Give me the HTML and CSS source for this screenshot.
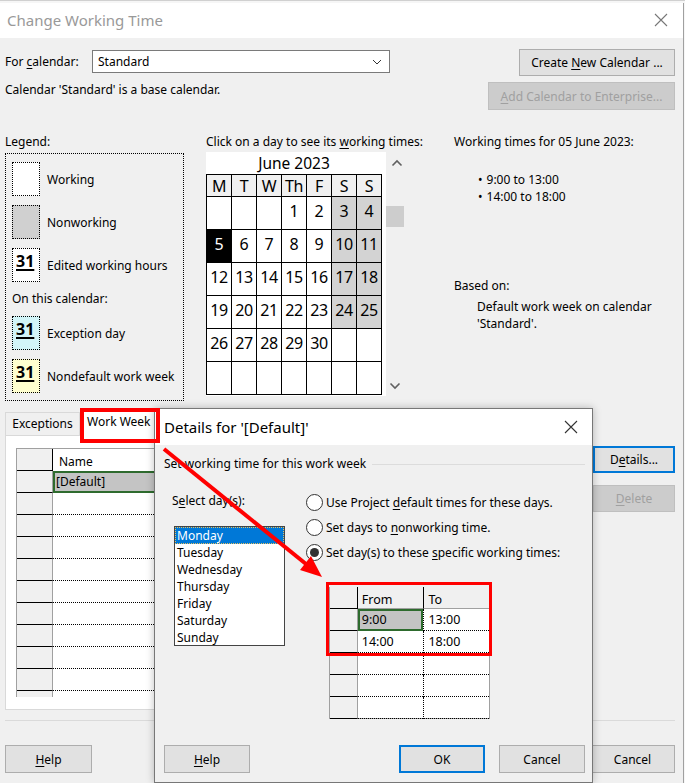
FILE: index.html
```html
<!DOCTYPE html>
<html>
<head>
    <title>Change Working Time</title>
    <link rel="stylesheet" href="styles.css">
</head>
<body>
<div class="desk">
  <div class="window">
    <div class="titlebar">
      <span class="title">Change Working Time</span>
      <svg class="close close-main" width="14" height="14" viewBox="0 0 14 14"><path d="M1 1L13 13M13 1L1 13"/></svg>
    </div>

    <div class="main">
      <div class="top">
        <div class="top-left">
          <div class="calendar-pick">
            <span class="pick-label">For <u>c</u>alendar:</span>
            <div class="select">
              <span>Standard</span>
              <svg width="10" height="6" viewBox="0 0 10 6"><path d="M1 1L5 5L9 1"/></svg>
            </div>
          </div>
          <div class="base-note">Calendar 'Standard' is a base calendar.</div>
        </div>
        <div class="top-right">
          <button class="btn btn-create">Create <u>N</u>ew Calendar ...</button>
          <button class="btn btn-add disabled"><u>A</u>dd Calendar to Enterprise...</button>
        </div>
      </div>

      <div class="middle">
        <div class="legend-col">
          <div class="caption">Legend:</div>
          <div class="legend">
            <div class="legend-item"><span class="swatch"></span>Working</div>
            <div class="legend-item"><span class="swatch nonworking"></span>Nonworking</div>
            <div class="legend-item"><span class="swatch"><b>31</b></span>Edited working hours</div>
            <div class="legend-sub">On this calendar:</div>
            <div class="legend-item"><span class="swatch exception"><b>31</b></span>Exception day</div>
            <div class="legend-item"><span class="swatch nondefault"><b>31</b></span>Nondefault work week</div>
          </div>
        </div>

        <div class="cal-col">
          <div class="caption">Click on a day to see its <u>w</u>orking times:</div>
          <div class="cal-panel">
            <div class="month-title">June 2023</div>
            <table class="month">
              <tr class="dow"><td>M</td><td>T</td><td>W</td><td>Th</td><td>F</td><td>S</td><td>S</td></tr>
              <tr><td></td><td></td><td></td><td>1</td><td>2</td><td class="off">3</td><td class="off">4</td></tr>
              <tr><td class="today">5</td><td>6</td><td>7</td><td>8</td><td>9</td><td class="off">10</td><td class="off">11</td></tr>
              <tr><td>12</td><td>13</td><td>14</td><td>15</td><td>16</td><td class="off">17</td><td class="off">18</td></tr>
              <tr><td>19</td><td>20</td><td>21</td><td>22</td><td>23</td><td class="off">24</td><td class="off">25</td></tr>
              <tr><td>26</td><td>27</td><td>28</td><td>29</td><td>30</td><td></td><td></td></tr>
              <tr><td></td><td></td><td></td><td></td><td></td><td></td><td></td></tr>
            </table>
          </div>
        </div>

        <div class="cal-scroll">
          <svg class="chev" width="12" height="8" viewBox="0 0 12 8"><path d="M1.5 6.5L6 2L10.5 6.5"/></svg>
          <div class="thumb"></div>
          <svg class="chev chev-down" width="12" height="8" viewBox="0 0 12 8"><path d="M1.5 1.5L6 6L10.5 1.5"/></svg>
        </div>

        <div class="info-col">
          <div class="caption">Working times for 05 June 2023:</div>
          <ul class="times-list">
            <li>9:00 to 13:00</li>
            <li>14:00 to 18:00</li>
          </ul>
          <div class="based">Based on:</div>
          <div class="based-text">Default work week on calendar<br>'Standard'.</div>
        </div>
      </div>

      <div class="tabs">
        <div class="tab">Exceptions</div>
        <div class="tab active">Work Week</div>
      </div>
      <div class="tab-row">
        <div class="panel">
          <div class="week-grid">
            <div class="wg-row wg-head"><div class="rh"></div><div class="wg-cell">Name</div></div>
            <div class="wg-row"><div class="rh"></div><div class="wg-cell sel">[Default]</div></div>
            <div class="wg-row"><div class="rh"></div><div class="wg-cell"></div></div>
            <div class="wg-row"><div class="rh"></div><div class="wg-cell"></div></div>
            <div class="wg-row"><div class="rh"></div><div class="wg-cell"></div></div>
            <div class="wg-row"><div class="rh"></div><div class="wg-cell"></div></div>
            <div class="wg-row"><div class="rh"></div><div class="wg-cell"></div></div>
            <div class="wg-row"><div class="rh"></div><div class="wg-cell"></div></div>
            <div class="wg-row"><div class="rh"></div><div class="wg-cell"></div></div>
            <div class="wg-row"><div class="rh"></div><div class="wg-cell"></div></div>
            <div class="wg-row"><div class="rh"></div><div class="wg-cell"></div></div>
            <div class="wg-row"><div class="rh"></div><div class="wg-cell"></div></div>
          </div>
        </div>
        <div class="side-buttons">
          <button class="btn focused">D<u>e</u>tails...</button>
          <button class="btn disabled"><u>D</u>elete</button>
        </div>
      </div>

      <div class="separator"></div>
      <div class="footer">
        <button class="btn btn-help"><u>H</u>elp</button>
        <button class="btn btn-cancel">Cancel</button>
      </div>
    </div>
  </div>
</div>

<!-- details dialog lies over the main window -->
<div class="dialog">
  <div class="titlebar dlg-titlebar">
    <span class="title">Details for '[Default]'</span>
    <svg class="close" width="14" height="14" viewBox="0 0 14 14"><path d="M1 1L13 13M13 1L1 13"/></svg>
  </div>
  <div class="dlg-body">
    <div class="group-head"><span>Set working time for this work week</span><div class="group-line"></div></div>
    <div class="dlg-cols">
      <div class="days-col">
        <div>S<u>e</u>lect day(s):</div>
        <ul class="days">
          <li class="sel">Monday</li>
          <li>Tuesday</li>
          <li>Wednesday</li>
          <li>Thursday</li>
          <li>Friday</li>
          <li>Saturday</li>
          <li>Sunday</li>
        </ul>
      </div>
      <div class="opts-col">
        <div class="radio-row"><span class="radio"></span><span>Use Project <u>d</u>efault times for these days.</span></div>
        <div class="radio-row"><span class="radio"></span><span>Set days to <u>n</u>onworking time.</span></div>
        <div class="radio-row"><span class="radio checked"></span><span>Set day(s) to these <u>s</u>pecific working times:</span></div>
        <div class="times">
          <div class="t-row t-head"><div class="t-rh"></div><div class="t-c">From</div><div class="t-c">To</div></div>
          <div class="t-row"><div class="t-rh"></div><div class="t-c sel">9:00</div><div class="t-c">13:00</div></div>
          <div class="t-row"><div class="t-rh"></div><div class="t-c">14:00</div><div class="t-c">18:00</div></div>
          <div class="t-row"><div class="t-rh"></div><div class="t-c"></div><div class="t-c"></div></div>
          <div class="t-row"><div class="t-rh"></div><div class="t-c"></div><div class="t-c"></div></div>
          <div class="t-row"><div class="t-rh"></div><div class="t-c"></div><div class="t-c"></div></div>
        </div>
      </div>
    </div>
    <div class="dlg-footer">
      <button class="btn"><u>H</u>elp</button>
      <span class="grow"></span>
      <button class="btn focused">OK</button>
      <button class="btn">Cancel</button>
    </div>
  </div>
</div>

<!-- red annotation marks -->
<div class="mark mark-tab"></div>
<div class="mark mark-times"></div>
<svg class="arrow" width="685" height="783" viewBox="0 0 685 783">
  <line x1="164" y1="449" x2="306" y2="564"/>
  <polygon points="322,577 300,570 311,556"/>
</svg>
</body>
</html>
```

FILE: styles.css
```css
* {
    box-sizing: border-box;
}
body {
    margin: 0;
    width: 685px;
    height: 783px;
    overflow: hidden;
    font-family: "Noto Sans", "Liberation Sans", sans-serif;
    font-size: 12px;
    color: #000;
    background: #fafafa;
    position: relative;
}
u {
    text-decoration: underline;
    text-underline-offset: 2px;
}
ul {
    margin: 0;
    padding: 0;
    list-style: none;
}
.desk {
    padding-top: 3px;
    background: linear-gradient(#d0d0d0 0 1px, #f6f6f6 1px);
}
.window {
    width: 684px;
    height: 780px;
    background: #f0f0f0;
    border-right: 1px solid #a0a0a0;
}
.titlebar {
    height: 35px;
    background: #fff;
    display: flex;
    align-items: center;
    justify-content: space-between;
    padding: 0 15px 1px 7px;
}
.titlebar .title {
    font-size: 15px;
    color: #999;
}
.close path {
    stroke: #333;
    stroke-width: 1.1;
    fill: none;
}
.close-main path {
    stroke: #777;
}
.btn {
    font: inherit;
    color: #000;
    background: #e1e1e1;
    border: 1px solid #adadad;
    height: 27px;
    padding: 0;
    text-align: center;
}
.btn.disabled {
    background: #cccccc;
    border-color: #bfbfbf;
    color: #a0a0a0;
}
.btn.focused {
    border: 2px solid #0078d7;
}

.main {
    padding: 11px 8px 0 5px;
}
.top {
    display: flex;
    justify-content: space-between;
    height: 61px;
}
.top-left {
    padding-top: 1px;
}
.calendar-pick {
    display: flex;
    height: 23px;
    line-height: 23px;
}
.pick-label {
    width: 87px;
}
.select {
    width: 298px;
    height: 23px;
    background: #fff;
    border: 1px solid #7a7a7a;
    padding: 0 7px 0 5px;
    display: flex;
    align-items: center;
    justify-content: space-between;
    line-height: 20px;
}
.select path {
    stroke: #333;
    fill: none;
    stroke-width: 1;
}
.base-note {
    margin-top: 9px;
    line-height: 16px;
}
.top-right {
    display: flex;
    flex-direction: column;
    align-items: flex-end;
    gap: 6px;
}
.btn-create {
    width: 156px;
}
.btn-add {
    width: 187px;
    height: 28px;
}

.middle {
    display: flex;
    margin-top: 24px;
    height: 267px;
}
.caption {
    line-height: 16px;
    white-space: nowrap;
}
.legend-col {
    width: 179px;
}
.legend {
    margin-top: 3px;
    height: 248px;
    border: 1px dotted #000;
    padding: 8px 0 0 6px;
}
.legend-item {
    display: flex;
    align-items: center;
    height: 34px;
    margin-bottom: 9px;
}
.swatch {
    width: 28px;
    height: 34px;
    border: 1px dotted #000;
    background: #fff;
    margin-right: 7px;
    padding: 5px 0 0 3px;
}
.swatch b {
    display: block;
    font-size: 16px;
    line-height: 15px;
    text-decoration: underline;
    text-decoration-thickness: 2px;
    text-underline-offset: 2px;
}
.swatch.nonworking {
    background: #d0d0d0;
}
.swatch.exception {
    background: #d2f5f8;
}
.swatch.nondefault {
    background: #ffffcf;
}
.legend-sub {
    line-height: 17px;
    margin: -1px 0 9px;
}

.cal-col {
    margin-left: 22px;
    width: 180px;
}
.cal-panel {
    margin-top: 2px;
    height: 244px;
    background: #fff;
}
.month-title {
    width: 176px;
    height: 22px;
    line-height: 22px;
    text-align: center;
    font-size: 15.5px;
}
.month {
    border-collapse: collapse;
    table-layout: fixed;
    width: 176px;
}
.month td {
    border: 1px solid #000;
    width: 25px;
    height: 33px;
    padding: 0 0 4px;
    text-align: center;
    font-size: 16px;
    letter-spacing: -0.3px;
    line-height: 16px;
    vertical-align: middle;
}
.month .dow td {
    height: 22px;
    padding: 0;
    background: #f0f0f0;
}
.month td.off {
    background: #d3d3d3;
}
.month td.today {
    background: #000;
    color: #fff;
}
.cal-scroll {
    width: 18px;
    margin-top: 18px;
    height: 244px;
    display: flex;
    flex-direction: column;
    align-items: center;
}
.chev {
    margin-top: 7px;
    margin-left: 4px;
}
.chev path {
    stroke: #606060;
    stroke-width: 1.6;
    fill: none;
}
.thumb {
    width: 18px;
    height: 21px;
    background: #cdcdcd;
    margin-top: 39px;
}
.chev-down {
    margin-top: auto;
    margin-bottom: 6px;
    margin-left: 0;
}
.info-col {
    margin-left: 50px;
}
.times-list {
    margin-top: 21px;
    padding-left: 24px;
}
.times-list li {
    line-height: 17px;
}
.times-list li::before {
    content: "\2022";
    margin-right: 4px;
}
.based {
    margin-top: 72px;
    line-height: 17px;
}
.based-text {
    margin-top: 4px;
    padding-left: 23px;
    line-height: 17px;
}

.tabs {
    margin-top: 7px;
    height: 27px;
    display: flex;
    align-items: flex-end;
    position: relative;
    z-index: 1;
}
.tab {
    width: 75px;
    height: 23px;
    line-height: 22px;
    text-align: center;
    background: #f0f0f0;
    border: 1px solid #d9d9d9;
    border-bottom: none;
}
.tab.active {
    width: 77px;
    height: 28px;
    margin-bottom: -1px;
    background: #fff;
    text-align: left;
    padding-left: 6px;
    line-height: 26px;
}
.tab-row {
    display: flex;
    height: 275px;
}
.panel {
    width: 580px;
    background: #fff;
    border: 1px solid #d9d9d9;
    padding: 12px 0 0 10px;
}
.week-grid {
    height: 249px;
    overflow: hidden;
    border-left: 1px solid #a0a0a0;
    border-top: 1px solid #a0a0a0;
}
.wg-row {
    display: flex;
    height: 22px;
}
.rh {
    width: 36px;
    background: #f0f0f0;
    border-bottom: 1px solid #000;
    border-right: 1px solid #a0a0a0;
}
.wg-head .rh {
    border-right-color: #000;
}
.wg-cell {
    flex: 1;
    border-bottom: 1px dotted #000;
    padding-left: 6px;
    line-height: 21px;
}
.wg-head .wg-cell {
    border-bottom: none;
    padding-top: 2px;
}
.wg-cell.sel {
    background: #c4c4c4;
    border: 2px solid #2e6b2e;
    padding-left: 1px;
    line-height: 18px;
}
.side-buttons {
    margin-left: 8px;
    padding-top: 11px;
    display: flex;
    flex-direction: column;
    gap: 12px;
}
.side-buttons .btn {
    width: 82px;
}
.separator {
    margin-top: 10px;
    width: 670px;
    height: 1px;
    background: #dadada;
}
.footer {
    margin-top: 24px;
    display: flex;
    justify-content: space-between;
}
.btn-help {
    width: 87px;
    height: 28px;
}
.btn-cancel {
    width: 85px;
    height: 28px;
}

.dialog {
    position: absolute;
    left: 154px;
    top: 408px;
    width: 439px;
    height: 375px;
    background: #f0f0f0;
    border: 1px solid #777;
    box-shadow: 0 0 8px rgba(0, 0, 0, 0.25);
    display: flex;
    flex-direction: column;
    z-index: 2;
}
.dlg-titlebar {
    height: 36px;
    padding: 0 14px 1px 9px;
}
.dlg-titlebar .title {
    color: #000;
}
.dlg-body {
    flex: 1;
    display: flex;
    flex-direction: column;
    padding: 11px 7px 9px 9px;
}
.group-head {
    display: flex;
    align-items: center;
    line-height: 16px;
}
.group-line {
    flex: 1;
    height: 1px;
    background: #dcdcdc;
    margin: 1px 0 0 6px;
}
.dlg-cols {
    display: flex;
    margin-top: 21px;
}
.days-col {
    padding-left: 8px;
    width: 122px;
    line-height: 16px;
}
.days {
    margin: 17px 0 0 2px;
    width: 111px;
    height: 120px;
    background: #fff;
    border: 1px solid #444;
}
.days li {
    height: 17px;
    line-height: 17px;
    padding-left: 2px;
}
.days li.sel {
    background: #0078d7;
    color: #fff;
    outline: 1px dotted #e8c060;
    outline-offset: -1px;
}
.opts-col {
    margin-left: 20px;
}
.radio-row {
    display: flex;
    align-items: center;
    height: 18px;
    margin-bottom: 7px;
    white-space: nowrap;
}
.radio {
    width: 17px;
    height: 17px;
    border: 1px solid #333;
    border-radius: 50%;
    background: #fff;
    margin-right: 3px;
    display: flex;
    align-items: center;
    justify-content: center;
}
.radio.checked::after {
    content: "";
    width: 9px;
    height: 9px;
    border-radius: 50%;
    background: #333;
}
.times {
    margin: 26px 0 0 23px;
    width: 161px;
    height: 132px;
    border: 1px solid #a0a0a0;
    border-top: none;
    background: #fff;
}
.t-row {
    display: flex;
    height: 22px;
}
.t-rh {
    width: 28px;
    background: #f0f0f0;
    border-bottom: 1px solid #000;
    border-right: 1px solid #a0a0a0;
}
.t-c {
    width: 66px;
    border-bottom: 1px dotted #000;
    padding-left: 4px;
    line-height: 21px;
    font-size: 12.5px;
}
.t-c + .t-c {
    border-left: 1px dotted #000;
}
.t-head .t-rh {
    border-right-color: #000;
}
.t-head .t-c {
    background: #f0f0f0;
    border-bottom: 1px solid #a0a0a0;
    padding-top: 4px;
    line-height: 18px;
}
.t-head .t-c + .t-c {
    border-left: 1px solid #000;
}
.t-c.sel {
    background: #c4c4c4;
    border: 2px solid #2e6b2e;
    padding-left: 2px;
    line-height: 18px;
}
.dlg-footer {
    margin-top: auto;
    display: flex;
    gap: 14px;
}
.dlg-footer .btn {
    width: 86px;
    height: 28px;
}
.grow {
    flex: 1;
}

.mark {
    position: absolute;
    border: 3px solid #f00;
    z-index: 3;
}
.mark-tab {
    left: 80px;
    top: 408px;
    width: 80px;
    height: 35px;
    border-width: 4px;
}
.mark-times {
    left: 326px;
    top: 582px;
    width: 166px;
    height: 74px;
}
.arrow {
    position: absolute;
    left: 0;
    top: 0;
    z-index: 4;
    pointer-events: none;
}
.arrow line {
    stroke: #f00;
    stroke-width: 4;
}
.arrow polygon {
    fill: #f00;
}
```
